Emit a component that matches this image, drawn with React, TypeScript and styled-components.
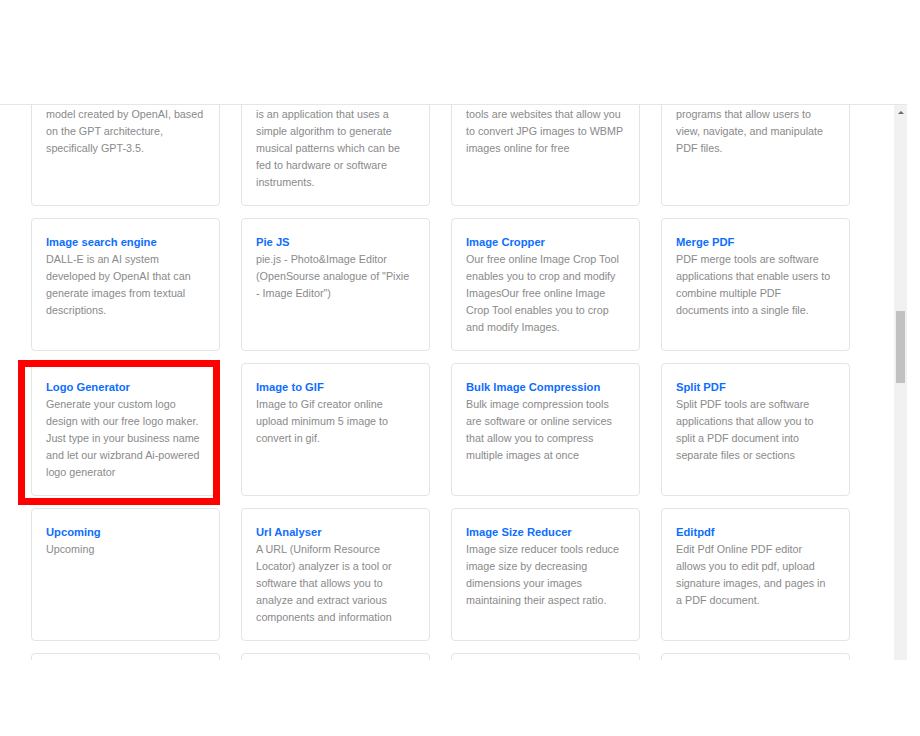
import React, { useLayoutEffect, useRef } from 'react';
import styled, { createGlobalStyle } from 'styled-components';

const GlobalStyle = createGlobalStyle`
  html, body {
    margin: 0;
    padding: 0;
    background: #ffffff;
    font-family: "Liberation Sans", Arial, sans-serif;
  }
`;

interface ITool {
  title: string;
  text: string;
  marked?: boolean;
}

const tools: ITool[] = [
  {
    title: 'ChatGPT',
    text: 'ChatGPT is a large language model created by OpenAI, based on the GPT architecture, specifically GPT-3.5.',
  },
  {
    title: 'Music Generator',
    text: 'A random music generator tools is an application that uses a simple algorithm to generate musical patterns which can be fed to hardware or software instruments.',
  },
  {
    title: 'JPG to WBMP',
    text: 'JPG to WBMP converter online tools are websites that allow you to convert JPG images to WBMP images online for free',
  },
  {
    title: 'PDF Viewer',
    text: 'PDF viewer tools are software programs that allow users to view, navigate, and manipulate PDF files.',
  },
  {
    title: 'Image search engine',
    text: 'DALL-E is an AI system developed by OpenAI that can generate images from textual descriptions.',
  },
  {
    title: 'Pie JS',
    text: 'pie.js - Photo&Image Editor (OpenSourse analogue of "Pixie - Image Editor")',
  },
  {
    title: 'Image Cropper',
    text: 'Our free online Image Crop Tool enables you to crop and modify ImagesOur free online Image Crop Tool enables you to crop and modify Images.',
  },
  {
    title: 'Merge PDF',
    text: 'PDF merge tools are software applications that enable users to combine multiple PDF documents into a single file.',
  },
  {
    title: 'Logo Generator',
    text: 'Generate your custom logo design with our free logo maker. Just type in your business name and let our wizbrand Ai-powered logo generator',
    marked: true,
  },
  {
    title: 'Image to GIF',
    text: 'Image to Gif creator online upload minimum 5 image to convert in gif.',
  },
  {
    title: 'Bulk Image Compression',
    text: 'Bulk image compression tools are software or online services that allow you to compress multiple images at once',
  },
  {
    title: 'Split PDF',
    text: 'Split PDF tools are software applications that allow you to split a PDF document into separate files or sections',
  },
  { title: 'Upcoming', text: 'Upcoming' },
  {
    title: 'Url Analyser',
    text: 'A URL (Uniform Resource Locator) analyzer is a tool or software that allows you to analyze and extract various components and information',
  },
  {
    title: 'Image Size Reducer',
    text: 'Image size reducer tools reduce image size by decreasing dimensions your images maintaining their aspect ratio.',
  },
  {
    title: 'Editpdf',
    text: 'Edit Pdf Online PDF editor allows you to edit pdf, upload signature images, and pages in a PDF document.',
  },
  { title: 'QR Code Generator', text: 'Create QR codes for links and text.' },
  { title: 'Word Counter', text: 'Count words and characters online.' },
  { title: 'PNG to JPG', text: 'Convert PNG images to JPG online.' },
  { title: 'Compress PDF', text: 'Reduce the size of PDF documents.' },
];

const Page = styled.div`
  display: flex;
  flex-direction: column;
  width: 907px;
`;

const TopSpace = styled.div`
  height: 104px;
`;

const Viewport = styled.div`
  display: flex;
  height: 555px;
  border-top: 1px solid #e6e6e6;
`;

const Scroller = styled.div`
  flex: 1;
  overflow: hidden;
`;

const Grid = styled.div`
  display: grid;
  grid-template-columns: repeat(4, 189px);
  column-gap: 21px;
  row-gap: 12px;
  padding: 0 0 40px 31px;
`;

const Card = styled.div`
  position: relative;
  box-sizing: border-box;
  border: 1px solid #e4e4e4;
  border-radius: 4px;
  padding: 15px 15px 14px 14px;
  background: #ffffff;
`;

const Title = styled.div`
  font-size: 11.2px;
  line-height: 17px;
  font-weight: 700;
  color: #0d6efd;
`;

const Text = styled.div`
  font-size: 10.75px;
  line-height: 17px;
  color: #8a8a8a;
`;

const Highlight = styled.div`
  position: absolute;
  top: -4px;
  left: -14px;
  right: -1px;
  bottom: -10px;
  border: 7px solid #ff0000;
  pointer-events: none;
`;

const Track = styled.div`
  width: 13px;
  background: #f1f1f1;
  display: flex;
  flex-direction: column;
  align-items: center;
`;

const ArrowButton = styled.div`
  height: 14px;
  display: flex;
  align-items: center;
  justify-content: center;

  &::before {
    content: '';
    border-left: 3px solid transparent;
    border-right: 3px solid transparent;
    border-bottom: 3px solid #6b6b6b;
  }
`;

const Thumb = styled.div`
  width: 9px;
  height: 72px;
  margin-top: 192px;
  background: #c1c1c1;
`;

const App = () => {
  const scrollRef = useRef<HTMLDivElement>(null);

  useLayoutEffect(() => {
    if (scrollRef.current) scrollRef.current.scrollTop = 49;
  }, []);

  return (
    <>
      <GlobalStyle />
      <Page>
        <TopSpace />
        <Viewport>
          <Scroller ref={scrollRef}>
            <Grid>
              {tools.map((tool) => (
                <Card key={tool.title}>
                  <Title>{tool.title}</Title>
                  <Text>{tool.text}</Text>
                  {tool.marked && <Highlight />}
                </Card>
              ))}
            </Grid>
          </Scroller>
          <Track>
            <ArrowButton />
            <Thumb />
          </Track>
        </Viewport>
      </Page>
    </>
  );
};

export default App;
